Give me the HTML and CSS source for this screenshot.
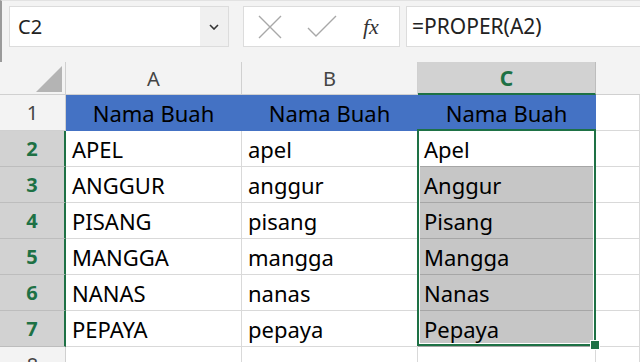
FILE: index.html
```html
<html>
<head>
<meta charset="utf-8">
<meta name="viewport" content="width=device-width, initial-scale=1">
<link rel="stylesheet" href="styles.css">
</head>
<body>
	<div class="formula-bar">
		<div class="namebox">
			<span class="namebox-text">C2</span>
			<span class="namebox-drop">
				<svg width="10" height="6" viewBox="0 0 10 6"><polyline points="1,1 5,5 9,1" fill="none" stroke="#333" stroke-width="1.6"/></svg>
			</span>
		</div>
		<div class="fx-box">
			<svg class="icon-cancel" width="24" height="24" viewBox="0 0 24 24"><path d="M1,1 L23,23 M23,1 L1,23" stroke="#a8a8a8" stroke-width="1.4" fill="none"/></svg>
			<svg class="icon-enter" width="30" height="24" viewBox="0 0 30 24"><polyline points="1,13 9,21 29,1" stroke="#a8a8a8" stroke-width="1.4" fill="none"/></svg>
			<span class="fx">fx</span>
		</div>
		<div class="formula">=PROPER(A2)</div>
	</div>

	<div class="sheet">
		<div class="corner"><span class="corner-tri"></span></div>
		<div class="col-head">A</div>
		<div class="col-head">B</div>
		<div class="col-head active">C</div>
		<div class="col-head blank"></div>

		<div class="row-head">1</div>
		<div class="cell title">Nama Buah</div>
		<div class="cell title">Nama Buah</div>
		<div class="cell title">Nama Buah</div>
		<div class="cell"></div>

		<div class="row-head active">2</div>
		<div class="cell">APEL</div>
		<div class="cell">apel</div>
		<div class="cell sel current">Apel<div class="selection"><span class="handle"></span></div></div>
		<div class="cell"></div>

		<div class="row-head active">3</div>
		<div class="cell">ANGGUR</div>
		<div class="cell">anggur</div>
		<div class="cell sel">Anggur</div>
		<div class="cell"></div>

		<div class="row-head active">4</div>
		<div class="cell">PISANG</div>
		<div class="cell">pisang</div>
		<div class="cell sel">Pisang</div>
		<div class="cell"></div>

		<div class="row-head active">5</div>
		<div class="cell">MANGGA</div>
		<div class="cell">mangga</div>
		<div class="cell sel">Mangga</div>
		<div class="cell"></div>

		<div class="row-head active">6</div>
		<div class="cell">NANAS</div>
		<div class="cell">nanas</div>
		<div class="cell sel">Nanas</div>
		<div class="cell"></div>

		<div class="row-head active">7</div>
		<div class="cell">PEPAYA</div>
		<div class="cell">pepaya</div>
		<div class="cell sel">Pepaya</div>
		<div class="cell"></div>

		<div class="row-head">8</div>
		<div class="cell"></div>
		<div class="cell"></div>
		<div class="cell"></div>
		<div class="cell"></div>
	</div>
</body>
</html>
```
FILE: styles.css
```css
body {
	margin: 0;
	background: #f3f3f3;
	font-family: "Noto Sans", sans-serif;
	color: #000;
	overflow: hidden;
	width: 640px;
	height: 362px;
}

.formula-bar {
	display: flex;
	height: 62px;
	padding: 5px 0 0 7px;
	box-sizing: border-box;
	border-top: 1px solid #e2e2e2;
	border-left: 2px solid #9a9a9a;
}

.namebox {
	display: flex;
	width: 220px;
	height: 41px;
	box-sizing: border-box;
	border: 1px solid #dcdcdc;
	background: #fff;
}

.namebox-text {
	flex: 1;
	padding-left: 8px;
	font-size: 20px;
	line-height: 39px;
	color: #222;
}

.namebox-drop {
	width: 28px;
	background: #f0f0f0;
	display: flex;
	align-items: center;
	justify-content: center;
}

.fx-box {
	display: flex;
	align-items: center;
	width: 157px;
	height: 41px;
	margin-left: 14px;
	box-sizing: border-box;
	border: 1px solid #dcdcdc;
	background: #fff;
}

.icon-cancel {
	margin-left: 14px;
}

.icon-enter {
	margin-left: 25px;
}

.fx {
	margin-left: 26px;
	font-family: "Liberation Serif", serif;
	font-style: italic;
	font-size: 22px;
	color: #333;
}

.formula {
	flex: 1;
	height: 41px;
	margin-left: 6px;
	padding-left: 5px;
	box-sizing: border-box;
	border: 1px solid #dcdcdc;
	border-right: none;
	background: #fff;
	font-size: 21px;
	line-height: 39px;
	color: #222;
}

.sheet {
	display: grid;
	grid-template-columns: 66px 176px 176px 178px 1fr;
	grid-template-rows: 33px repeat(8, 36px);
	font-size: 22px;
}

.sheet > div {
	box-sizing: border-box;
}

.corner {
	position: relative;
	border-right: 1px solid #d0d0d0;
	border-bottom: 1px solid #d0d0d0;
}

.corner-tri {
	position: absolute;
	right: 3px;
	bottom: 2px;
	width: 0;
	height: 0;
	border-left: 26px solid transparent;
	border-bottom: 26px solid #b4b4b4;
}

.col-head {
	display: flex;
	align-items: center;
	justify-content: center;
	color: #444;
	font-size: 20px;
	border-right: 1px solid #d0d0d0;
	border-bottom: 1px solid #d0d0d0;
}

.col-head.blank {
	border-right: none;
}

.col-head.active {
	background: #d2d2d2;
	color: #1e7145;
	font-weight: bold;
	font-size: 21px;
	border-bottom: 2px solid #1e7145;
	border-right-color: #bdbdbd;
}

.row-head {
	display: flex;
	align-items: center;
	justify-content: center;
	color: #444;
	font-size: 20px;
	border-right: 1px solid #d0d0d0;
	border-bottom: 1px solid #d0d0d0;
}

.row-head.active {
	background: #d2d2d2;
	color: #1e7145;
	font-weight: bold;
	border-right: 2px solid #1e7145;
	border-bottom-color: #bdbdbd;
}

.cell {
	display: flex;
	align-items: center;
	padding-left: 6px;
	background: #fff;
	border-right: 1px solid #d9d9d9;
	border-bottom: 1px solid #d9d9d9;
	white-space: nowrap;
}

.cell.title {
	justify-content: center;
	padding-left: 0;
	background: #4472c4;
	border-color: #4472c4;
}

.cell.sel {
	background: #c6c6c6;
	border-bottom-color: #a6a6a6;
}

.cell.sel.current {
	position: relative;
	background: #fff;
}

.selection {
	position: absolute;
	top: -2px;
	left: -1px;
	width: 179px;
	height: 217px;
	box-sizing: border-box;
	border: 2px solid #1e7145;
	box-shadow: inset 0 0 0 1px #fff;
	pointer-events: none;
}

.handle {
	position: absolute;
	right: -6px;
	bottom: -6px;
	width: 8px;
	height: 8px;
	background: #1e7145;
	border: 1px solid #fff;
}
```
